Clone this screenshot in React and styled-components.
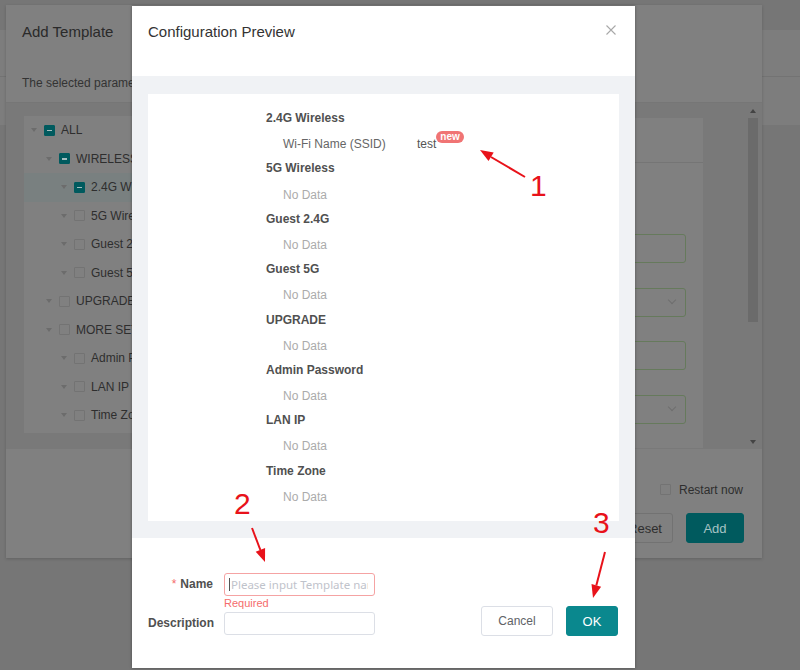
import React from "react";
import styled, { createGlobalStyle } from "styled-components";

const Global = createGlobalStyle`
  html, body { margin: 0; padding: 0; }
  body { font-family: "Liberation Sans", Arial, sans-serif; }
  * { box-sizing: border-box; }
`;

/* ---------- background scene (dimmed "Add Template" dialog) ---------- */

const Stage = styled.div`
  position: relative;
  width: 800px;
  height: 670px;
  overflow: hidden;
  padding: 5px 0 0 6px;
  background: linear-gradient(
    to bottom,
    #767676 0px, #767676 30px,
    #7d7d7d 30px, #7d7d7d 76px,
    #737373 76px, #737373 77px,
    #7d7d7d 77px, #7d7d7d 125px,
    #767676 125px
  );
`;

const BgDialog = styled.div`
  width: 756px;
  height: 553px;
  background: #808080;
  display: flex;
  flex-direction: column;
  box-shadow: 0 1px 3px rgba(0, 0, 0, 0.18);
`;

const BgHeader = styled.div`
  padding: 17px 16px 11px;
  border-bottom: 1px solid #767676;
  color: #2a2a2a;
`;

const BgTitle = styled.div`
  font-size: 15px;
  line-height: 20px;
`;

const BgDesc = styled.div`
  margin-top: 33px;
  font-size: 12px;
  line-height: 16px;
  color: #333;
  white-space: nowrap;
`;

const BgBody = styled.div`
  height: 346px;
  display: flex;
  background: #797979;
  padding: 0 4px 0 18px;
`;

const TreePanel = styled.div`
  width: 380px;
  height: 317px;
  margin-top: 13px;
  background: #808080;
`;

const TreeRow = styled.div`
  height: 28.5px;
  display: flex;
  align-items: center;
  padding-left: ${(p) => 6 + p.$level * 15}px;
  background: ${(p) => (p.$selected ? "#798080" : "transparent")};
  font-size: 12px;
  color: #2e2e2e;
  white-space: nowrap;
`;

const Caret = styled.span`
  width: 0;
  height: 0;
  border-left: 3px solid transparent;
  border-right: 3px solid transparent;
  border-top: 4px solid #6c6c6c;
  margin: 0 7px 0 1px;
`;

const Check = styled.span`
  width: 11px;
  height: 11px;
  border-radius: 1px;
  margin-right: 6px;
  display: flex;
  align-items: center;
  justify-content: center;
  background: ${(p) => (p.$on ? "#005a5e" : "#808080")};
  border: 1px solid ${(p) => (p.$on ? "#005a5e" : "#737373")};
  &::after {
    content: "";
    display: ${(p) => (p.$on ? "block" : "none")};
    width: 5px;
    height: 1.5px;
    background: #a4bfc0;
  }
`;

const FormPanel = styled.div`
  width: 299px;
  height: 330px;
  margin-top: 15px;
  background: #808080;
`;

const FormPanelHead = styled.div`
  height: 45px;
  border-bottom: 1px solid #757575;
`;

const FormFields = styled.div`
  display: flex;
  flex-direction: column;
  gap: 24.5px;
  padding: 71px 17px 0 0;
`;

const BgInput = styled.div`
  height: 29px;
  border: 1px solid #667a5c;
  border-radius: 3px;
  display: flex;
  align-items: center;
  justify-content: flex-end;
  padding-right: 10px;
`;

const Chevron = styled.span`
  width: 6px;
  height: 6px;
  border-right: 1px solid #6e6e6e;
  border-bottom: 1px solid #6e6e6e;
  transform: rotate(45deg);
  margin-top: -4px;
`;

const Spacer = styled.div`
  flex: 1;
`;

const ScrollBar = styled.div`
  width: 10px;
  display: flex;
  flex-direction: column;
  align-items: center;
`;

const ScrollArrow = styled.div`
  height: 15px;
  display: flex;
  align-items: center;
  justify-content: center;
  &::after {
    content: "";
    border-left: 3px solid transparent;
    border-right: 3px solid transparent;
    ${(p) => (p.$up ? "border-bottom: 4px solid #444;" : "border-top: 4px solid #444;")}
  }
`;

const ScrollThumb = styled.div`
  width: 10px;
  height: 204px;
  background: #6b6b6b;
`;

const BgFooter = styled.div`
  flex: 1;
  background: #808080;
  display: flex;
  flex-direction: column;
  align-items: flex-end;
  padding: 35px 18px 0;
`;

const RestartRow = styled.div`
  display: flex;
  align-items: center;
  height: 11px;
  font-size: 12px;
  color: #2e2e2e;
  gap: 8px;
  margin-right: 1px;
`;

const BgCheck = styled.span`
  width: 11px;
  height: 11px;
  border: 1px solid #737373;
  border-radius: 1px;
`;

const BgButtons = styled.div`
  display: flex;
  gap: 13px;
  margin-top: 18px;
`;

const BgButton = styled.div`
  height: 30px;
  width: ${(p) => p.$w}px;
  border-radius: 3px;
  display: flex;
  align-items: center;
  justify-content: center;
  font-size: 13px;
  background: ${(p) => (p.$primary ? "#005a5e" : "#808080")};
  color: ${(p) => (p.$primary ? "#a6c3c4" : "#2e2e2e")};
  border: 1px solid ${(p) => (p.$primary ? "#005a5e" : "#727272")};
`;

/* ---------- foreground modal ---------- */

const Modal = styled.div`
  position: absolute;
  left: 132px;
  top: 6px;
  width: 503px;
  height: 662px;
  background: #fff;
  display: flex;
  flex-direction: column;
  box-shadow: 0 0 3px rgba(0, 0, 0, 0.35);
`;

const ModalHeader = styled.div`
  height: 70px;
  display: flex;
  justify-content: space-between;
  align-items: flex-start;
  padding: 16px 19px 0 16px;
`;

const ModalTitle = styled.div`
  font-size: 15px;
  line-height: 20px;
  color: #333;
`;

const CloseBtn = styled.button`
  border: 0;
  background: none;
  padding: 0;
  margin-top: 3px;
  width: 10px;
  height: 10px;
  display: flex;
  cursor: pointer;
`;

const ModalBody = styled.div`
  height: 462px;
  background: #f0f2f5;
  padding: 18px 16px 17px;
`;

const PreviewPanel = styled.div`
  height: 100%;
  background: #fff;
  padding: 12px 0 0 118px;
`;

const SectionTitle = styled.div`
  height: 25.2px;
  line-height: 25.2px;
  font-size: 12px;
  font-weight: 700;
  color: #505050;
`;

const ItemRow = styled.div`
  height: 25.2px;
  line-height: 25.2px;
  font-size: 12px;
  display: flex;
  padding-left: 17px;
  padding-top: 1px;
  color: ${(p) => (p.$empty ? "#ababab" : "#666")};
`;

const ItemLabel = styled.span`
  width: 134px;
`;

const ItemValue = styled.span`
  position: relative;
  color: #555;
`;

const NewBadge = styled.span`
  position: absolute;
  left: 100%;
  top: -1px;
  height: 12px;
  line-height: 12px;
  padding: 0 4px;
  border-radius: 6px;
  background: #f07474;
  color: #fff;
  font-size: 10px;
  font-weight: 700;
`;

const ModalFooter = styled.div`
  flex: 1;
  display: flex;
  justify-content: space-between;
  align-items: flex-end;
  padding: 0 17px 32px 16px;
`;

const FormGrid = styled.div`
  display: grid;
  grid-template-columns: 65px 151px;
  column-gap: 11px;
  margin-bottom: 1px;
`;

const Label = styled.label`
  text-align: right;
  font-size: 12px;
  font-weight: 700;
  line-height: 23px;
  color: #505050;
  white-space: nowrap;
`;

const Star = styled.span`
  color: #f56c6c;
  font-weight: 400;
  margin-right: 4px;
`;

const FieldWrap = styled.div`
  position: relative;
  height: 23px;
`;

const TextInput = styled.input`
  width: 100%;
  height: 23px;
  border: 1px solid ${(p) => (p.$error ? "#f5a3a3" : "#dcdfe6")};
  border-radius: 3px;
  padding: 0 6px;
  font-family: "Noto Sans", "Liberation Sans", sans-serif;
  font-size: 11.5px;
  color: #333;
  outline: none;
  &::placeholder {
    color: #bfc3cb;
  }
`;

const FakeCaret = styled.span`
  position: absolute;
  left: 5px;
  top: 5px;
  width: 1px;
  height: 13px;
  background: #555;
`;

const ErrorText = styled.div`
  grid-column: 2;
  height: 16px;
  line-height: 14px;
  font-size: 11px;
  color: #f56c6c;
`;

const Buttons = styled.div`
  display: flex;
  gap: 13px;
`;

const Button = styled.button`
  height: 30px;
  width: ${(p) => p.$w}px;
  border-radius: 3px;
  font-family: "Liberation Sans", Arial, sans-serif;
  font-size: ${(p) => (p.$primary ? 13 : 12)}px;
  cursor: pointer;
  background: ${(p) => (p.$primary ? "#0a888e" : "#fff")};
  color: ${(p) => (p.$primary ? "#fff" : "#606266")};
  border: 1px solid ${(p) => (p.$primary ? "#0a888e" : "#dcdfe6")};
`;

/* ---------- annotations ---------- */

const Annotations = styled.svg`
  position: absolute;
  left: 0;
  top: 0;
  pointer-events: none;
`;

const Num = styled.span`
  position: absolute;
  left: ${(p) => p.$x}px;
  top: ${(p) => p.$y}px;
  font-family: "Liberation Sans", Arial, sans-serif;
  font-size: 30px;
  line-height: 1;
  color: #e8121a;
`;

const tree = [
  { label: "ALL", level: 0, on: true },
  { label: "WIRELESS", level: 1, on: true },
  { label: "2.4G Wireless", level: 2, on: true, selected: true },
  { label: "5G Wireless", level: 2 },
  { label: "Guest 2.4G", level: 2 },
  { label: "Guest 5G", level: 2 },
  { label: "UPGRADE", level: 1 },
  { label: "MORE SETTINGS", level: 1 },
  { label: "Admin Password", level: 2 },
  { label: "LAN IP", level: 2 },
  { label: "Time Zone", level: 2 },
];

const formFields = [false, true, false, true];

const sections = [
  { title: "2.4G Wireless", items: [{ label: "Wi-Fi Name (SSID)", value: "test", isNew: true }] },
  { title: "5G Wireless" },
  { title: "Guest 2.4G" },
  { title: "Guest 5G" },
  { title: "UPGRADE" },
  { title: "Admin Password" },
  { title: "LAN IP" },
  { title: "Time Zone" },
];

const arrows = [
  { line: "525,177 491,157", head: "480,150 493.7,152.4 488.5,161" },
  { line: "252,528 260.4,550", head: "265,562 265.1,548.1 255.7,551.7" },
  { line: "605,552 596.3,585.4", head: "593,598 601.1,586.7 591.5,584.1" },
];

export default function App() {
  return (
    <>
      <Global />
      <Stage>
        <BgDialog>
          <BgHeader>
            <BgTitle>Add Template</BgTitle>
            <BgDesc>The selected parameters will be saved as a configuration template.</BgDesc>
          </BgHeader>
          <BgBody>
            <TreePanel>
              {tree.map((t) => (
                <TreeRow key={t.label} $level={t.level} $selected={t.selected}>
                  <Caret />
                  <Check $on={t.on} />
                  {t.label}
                </TreeRow>
              ))}
            </TreePanel>
            <FormPanel>
              <FormPanelHead />
              <FormFields>
                {formFields.map((sel, i) => (
                  <BgInput key={i}>{sel && <Chevron />}</BgInput>
                ))}
              </FormFields>
            </FormPanel>
            <Spacer />
            <ScrollBar>
              <ScrollArrow $up />
              <ScrollThumb />
              <Spacer />
              <ScrollArrow />
            </ScrollBar>
          </BgBody>
          <BgFooter>
            <RestartRow>
              <BgCheck />
              Restart now
            </RestartRow>
            <BgButtons>
              <BgButton $w={56}>Reset</BgButton>
              <BgButton $w={58} $primary>Add</BgButton>
            </BgButtons>
          </BgFooter>
        </BgDialog>

        <Modal>
          <ModalHeader>
            <ModalTitle>Configuration Preview</ModalTitle>
            <CloseBtn aria-label="Close">
              <svg width="10" height="10" viewBox="0 0 10 10">
                <path d="M0.5 0.5 L9.5 9.5 M9.5 0.5 L0.5 9.5" stroke="#a8a8a8" strokeWidth="1.1" />
              </svg>
            </CloseBtn>
          </ModalHeader>
          <ModalBody>
            <PreviewPanel>
              {sections.map((s) => (
                <React.Fragment key={s.title}>
                  <SectionTitle>{s.title}</SectionTitle>
                  {s.items ? (
                    s.items.map((it) => (
                      <ItemRow key={it.label}>
                        <ItemLabel>{it.label}</ItemLabel>
                        <ItemValue>
                          {it.value}
                          {it.isNew && <NewBadge>new</NewBadge>}
                        </ItemValue>
                      </ItemRow>
                    ))
                  ) : (
                    <ItemRow $empty>No Data</ItemRow>
                  )}
                </React.Fragment>
              ))}
            </PreviewPanel>
          </ModalBody>
          <ModalFooter>
            <FormGrid>
              <Label>
                <Star>*</Star>Name
              </Label>
              <FieldWrap>
                <TextInput $error placeholder="Please input Template name" />
                <FakeCaret />
              </FieldWrap>
              <ErrorText>Required</ErrorText>
              <Label>Description</Label>
              <FieldWrap>
                <TextInput />
              </FieldWrap>
            </FormGrid>
            <Buttons>
              <Button $w={72}>Cancel</Button>
              <Button $w={52} $primary>OK</Button>
            </Buttons>
          </ModalFooter>
        </Modal>

        <Annotations width="800" height="670" viewBox="0 0 800 670">
          {arrows.map((a, i) => (
            <g key={i}>
              <polyline points={a.line} stroke="#e8121a" strokeWidth="2" fill="none" />
              <polygon points={a.head} fill="#e8121a" />
            </g>
          ))}
        </Annotations>
        <Num $x={530} $y={171}>1</Num>
        <Num $x={234} $y={489}>2</Num>
        <Num $x={593} $y={508}>3</Num>
      </Stage>
    </>
  );
}
